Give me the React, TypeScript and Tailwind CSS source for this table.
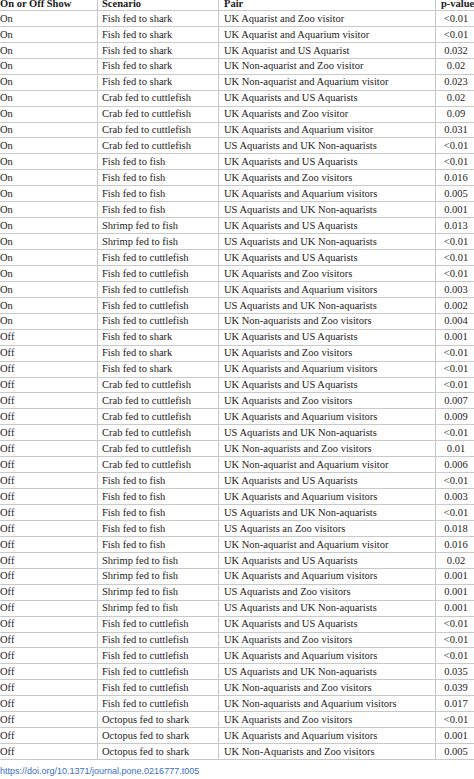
import React from "react";

type Row = [string, string, string, string];

const rows: Row[] = [
  ["On", "Fish fed to shark", "UK Aquarist and Zoo visitor", "<0.01"],
  ["On", "Fish fed to shark", "UK Aquarist and Aquarium visitor", "<0.01"],
  ["On", "Fish fed to shark", "UK Aquarist and US Aquarist", "0.032"],
  ["On", "Fish fed to shark", "UK Non-aquarist and Zoo visitor", "0.02"],
  ["On", "Fish fed to shark", "UK Non-aquarist and Aquarium visitor", "0.023"],
  ["On", "Crab fed to cuttlefish", "UK Aquarists and US Aquarists", "0.02"],
  ["On", "Crab fed to cuttlefish", "UK Aquarists and Zoo visitor", "0.09"],
  ["On", "Crab fed to cuttlefish", "UK Aquarists and Aquarium visitor", "0.031"],
  ["On", "Crab fed to cuttlefish", "US Aquarists and UK Non-aquarists", "<0.01"],
  ["On", "Fish fed to fish", "UK Aquarists and US Aquarists", "<0.01"],
  ["On", "Fish fed to fish", "UK Aquarists and Zoo visitors", "0.016"],
  ["On", "Fish fed to fish", "UK Aquarists and Aquarium visitors", "0.005"],
  ["On", "Fish fed to fish", "US Aquarists and UK Non-aquarists", "0.001"],
  ["On", "Shrimp fed to fish", "UK Aquarists and US Aquarists", "0.013"],
  ["On", "Shrimp fed to fish", "US Aquarists and UK Non-aquarists", "<0.01"],
  ["On", "Fish fed to cuttlefish", "UK Aquarists and US Aquarists", "<0.01"],
  ["On", "Fish fed to cuttlefish", "UK Aquarists and Zoo visitors", "<0.01"],
  ["On", "Fish fed to cuttlefish", "UK Aquarists and Aquarium visitors", "0.003"],
  ["On", "Fish fed to cuttlefish", "US Aquarists and UK Non-aquarists", "0.002"],
  ["On", "Fish fed to cuttlefish", "UK Non-aquarists and Zoo visitors", "0.004"],
  ["Off", "Fish fed to shark", "UK Aquarists and US Aquarists", "0.001"],
  ["Off", "Fish fed to shark", "UK Aquarists and Zoo visitors", "<0.01"],
  ["Off", "Fish fed to shark", "UK Aquarists and Aquarium visitors", "<0.01"],
  ["Off", "Crab fed to cuttlefish", "UK Aquarists and US Aquarists", "<0.01"],
  ["Off", "Crab fed to cuttlefish", "UK Aquarists and Zoo visitors", "0.007"],
  ["Off", "Crab fed to cuttlefish", "UK Aquarists and Aquarium visitors", "0.009"],
  ["Off", "Crab fed to cuttlefish", "US Aquarists and UK Non-aquarists", "<0.01"],
  ["Off", "Crab fed to cuttlefish", "UK Non-aquarists and Zoo visitors", "0.01"],
  ["Off", "Crab fed to cuttlefish", "UK Non-aquarist and Aquarium visitor", "0.006"],
  ["Off", "Fish fed to fish", "UK Aquarists and US Aquarists", "<0.01"],
  ["Off", "Fish fed to fish", "UK Aquarists and Aquarium visitors", "0.003"],
  ["Off", "Fish fed to fish", "US Aquarists and UK Non-aquarists", "<0.01"],
  ["Off", "Fish fed to fish", "US Aquarists an Zoo visitors", "0.018"],
  ["Off", "Fish fed to fish", "UK Non-aquarist and Aquarium visitor", "0.016"],
  ["Off", "Shrimp fed to fish", "UK Aquarists and US Aquarists", "0.02"],
  ["Off", "Shrimp fed to fish", "UK Aquarists and Aquarium visitors", "0.001"],
  ["Off", "Shrimp fed to fish", "US Aquarists and Zoo visitors", "0.001"],
  ["Off", "Shrimp fed to fish", "US Aquarists and UK Non-aquarists", "0.001"],
  ["Off", "Fish fed to cuttlefish", "UK Aquarists and US Aquarists", "<0.01"],
  ["Off", "Fish fed to cuttlefish", "UK Aquarists and Zoo visitors", "<0.01"],
  ["Off", "Fish fed to cuttlefish", "UK Aquarists and Aquarium visitors", "<0.01"],
  ["Off", "Fish fed to cuttlefish", "US Aquarists and UK Non-aquarists", "0.035"],
  ["Off", "Fish fed to cuttlefish", "UK Non-aquarists and Zoo visitors", "0.039"],
  ["Off", "Fish fed to cuttlefish", "UK Non-aquarists and Aquarium visitors", "0.017"],
  ["Off", "Octopus fed to shark", "UK Aquarists and Zoo visitors", "<0.01"],
  ["Off", "Octopus fed to shark", "UK Aquarists and Aquarium visitors", "0.001"],
  ["Off", "Octopus fed to shark", "UK Non-Aquarists and Zoo visitors", "0.005"],
];

const rowClass =
  "grid grid-cols-[98px_121px_217px_46px] h-[15.95px] border-b border-[#c9c9c9]";
const cell = "flex items-center pt-[1px] border-r border-[#c9c9c9] whitespace-nowrap";
const headCell = "flex items-end pb-0 border-r border-[#c9c9c9] whitespace-nowrap";

const App = () => {
  return (
    <main className="w-[474px] h-[779px] overflow-hidden bg-white">
      <div className="w-[482px] -mt-[5px] font-['Liberation_Serif',serif] text-[10.5px] text-[#1e1b1c] leading-none">
        <div className={rowClass + " font-bold"}>
          <div className={headCell}>On or Off Show</div>
          <div className={headCell + " pl-[4px]"}>Scenario</div>
          <div className={headCell + " pl-[5px]"}>Pair</div>
          <div className="flex items-end pb-0 pl-[5px]">p-value</div>
        </div>
        {rows.map(([show, scenario, pair, p], index) => (
          <div key={index} className={rowClass}>
            <div className={cell}>{show}</div>
            <div className={cell + " pl-[4px]"}>{scenario}</div>
            <div className={cell + " pl-[5px]"}>{pair}</div>
            <div className="flex items-center justify-center pt-[1px] pr-[6px]">{p}</div>
          </div>
        ))}
      </div>
      <p className="mt-[7px] font-['Liberation_Sans',sans-serif] text-[9px] leading-none text-[#3a6ec8]">
        https://doi.org/10.1371/journal.pone.0216777.t005
      </p>
    </main>
  );
};

export default App;
